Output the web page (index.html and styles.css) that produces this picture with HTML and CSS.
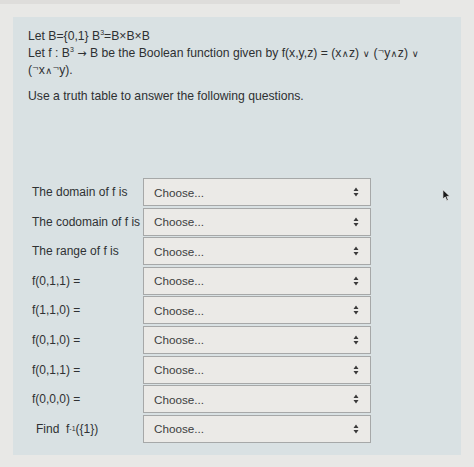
FILE: index.html
```html
<!DOCTYPE html>
<html>
<head>
<meta charset="utf-8">
<link rel="stylesheet" href="styles.css">
</head>
<body>
<div class="topstrip"></div>
<div class="panel">
  <div class="intro">
    <div class="line">Let B={0,1} B<sup>3</sup>=B×B×B</div>
    <div class="line">Let f : B<sup>3</sup> <span class="arr">→</span> B be the Boolean function given by f(x,y,z) = (x<span class="op">∧</span>z) <span class="op">∨</span> (<span class="neg">¬</span>y<span class="op">∧</span>z) <span class="op">∨</span></div>
    <div class="line">(<span class="neg">¬</span>x<span class="op">∧</span><span class="neg">¬</span>y).</div>
  </div>
  <p class="ask">Use a truth table to answer the following questions.</p>

  <div class="form">
    <div class="label">The domain of f is</div>
    <div class="select"><span>Choose...</span><svg class="caret" viewBox="0 0 6 10" width="6" height="10"><path d="M3 0.5 L5.5 4 L0.5 4 Z M3 9.5 L5.5 6 L0.5 6 Z" fill="#3a3a3a"/></svg></div>

    <div class="label">The codomain of f is</div>
    <div class="select"><span>Choose...</span><svg class="caret" viewBox="0 0 6 10" width="6" height="10"><path d="M3 0.5 L5.5 4 L0.5 4 Z M3 9.5 L5.5 6 L0.5 6 Z" fill="#3a3a3a"/></svg></div>

    <div class="label">The range of f is</div>
    <div class="select"><span>Choose...</span><svg class="caret" viewBox="0 0 6 10" width="6" height="10"><path d="M3 0.5 L5.5 4 L0.5 4 Z M3 9.5 L5.5 6 L0.5 6 Z" fill="#3a3a3a"/></svg></div>

    <div class="label">f(0,1,1) =</div>
    <div class="select"><span>Choose...</span><svg class="caret" viewBox="0 0 6 10" width="6" height="10"><path d="M3 0.5 L5.5 4 L0.5 4 Z M3 9.5 L5.5 6 L0.5 6 Z" fill="#3a3a3a"/></svg></div>

    <div class="label">f(1,1,0) =</div>
    <div class="select"><span>Choose...</span><svg class="caret" viewBox="0 0 6 10" width="6" height="10"><path d="M3 0.5 L5.5 4 L0.5 4 Z M3 9.5 L5.5 6 L0.5 6 Z" fill="#3a3a3a"/></svg></div>

    <div class="label">f(0,1,0) =</div>
    <div class="select"><span>Choose...</span><svg class="caret" viewBox="0 0 6 10" width="6" height="10"><path d="M3 0.5 L5.5 4 L0.5 4 Z M3 9.5 L5.5 6 L0.5 6 Z" fill="#3a3a3a"/></svg></div>

    <div class="label">f(0,1,1) =</div>
    <div class="select"><span>Choose...</span><svg class="caret" viewBox="0 0 6 10" width="6" height="10"><path d="M3 0.5 L5.5 4 L0.5 4 Z M3 9.5 L5.5 6 L0.5 6 Z" fill="#3a3a3a"/></svg></div>

    <div class="label">f(0,0,0) =</div>
    <div class="select"><span>Choose...</span><svg class="caret" viewBox="0 0 6 10" width="6" height="10"><path d="M3 0.5 L5.5 4 L0.5 4 Z M3 9.5 L5.5 6 L0.5 6 Z" fill="#3a3a3a"/></svg></div>

    <div class="label find">Find &nbsp;f<sup>-1</sup>({1})</div>
    <div class="select"><span>Choose...</span><svg class="caret" viewBox="0 0 6 10" width="6" height="10"><path d="M3 0.5 L5.5 4 L0.5 4 Z M3 9.5 L5.5 6 L0.5 6 Z" fill="#3a3a3a"/></svg></div>
  </div>

  <svg class="cursor" viewBox="0 0 10 14" width="9" height="13"><path d="M1 0.5 L1 11 L3.6 8.6 L5.4 12.8 L7 12.1 L5.3 8 L8.8 8 Z" fill="#1a1a1a" stroke="#f0f0f0" stroke-width="0.8"/></svg>
</div>
</body>
</html>
```

FILE: styles.css
```css
html, body {
  margin: 0;
  padding: 0;
}
body {
  background: #e8e8e6;
  font-family: "Liberation Sans", Arial, sans-serif;
  color: #2e3032;
  width: 474px;
  height: 467px;
  overflow: hidden;
  position: relative;
}
.topstrip {
  height: 4px;
  width: 400px;
  background: #dedddb;
}
.panel {
  position: relative;
  box-sizing: border-box;
  margin: 13px 13px 0 13px;
  width: 448px;
  height: 438px;
  background: #d9e1e3;
  padding: 11px 15px 0 15px;
}
.intro {
  font-size: 12.2px;
  line-height: 17px;
}
.line {
  white-space: nowrap;
}
.line sup {
  font-size: 7px;
  vertical-align: 5px;
  line-height: 0;
}
.op {
  font-family: "DejaVu Sans", sans-serif;
  font-size: 9.5px;
  margin: 0 0.3px;
}
.neg {
  font-family: "DejaVu Sans", sans-serif;
  font-size: 8px;
  vertical-align: 3px;
  line-height: 0;
}
.arr {
  font-family: "DejaVu Sans", sans-serif;
  font-size: 11px;
}
.ask {
  margin: 9px 0 0 0;
  font-size: 12.2px;
  line-height: 17px;
}
.form {
  margin-top: 73px;
  display: grid;
  grid-template-columns: 111px 228px;
  row-gap: 1.6px;
  padding-left: 4px;
}
.label {
  font-size: 12px;
  height: 28px;
  display: flex;
  align-items: center;
  white-space: nowrap;
  color: #2f3133;
}
.label sup {
  font-size: 7px;
  vertical-align: 5px;
  line-height: 0;
}
.find {
  padding-left: 4px;
}
.select {
  box-sizing: border-box;
  height: 28px;
  border: 1px solid #a6a8a8;
  background: #ebeae7;
  display: flex;
  align-items: center;
  justify-content: space-between;
  padding: 0 11px 0 10px;
  font-size: 11.7px;
  color: #3c3e40;
}
.caret {
  display: block;
}
.cursor {
  position: absolute;
  left: 429px;
  top: 172px;
}
```
